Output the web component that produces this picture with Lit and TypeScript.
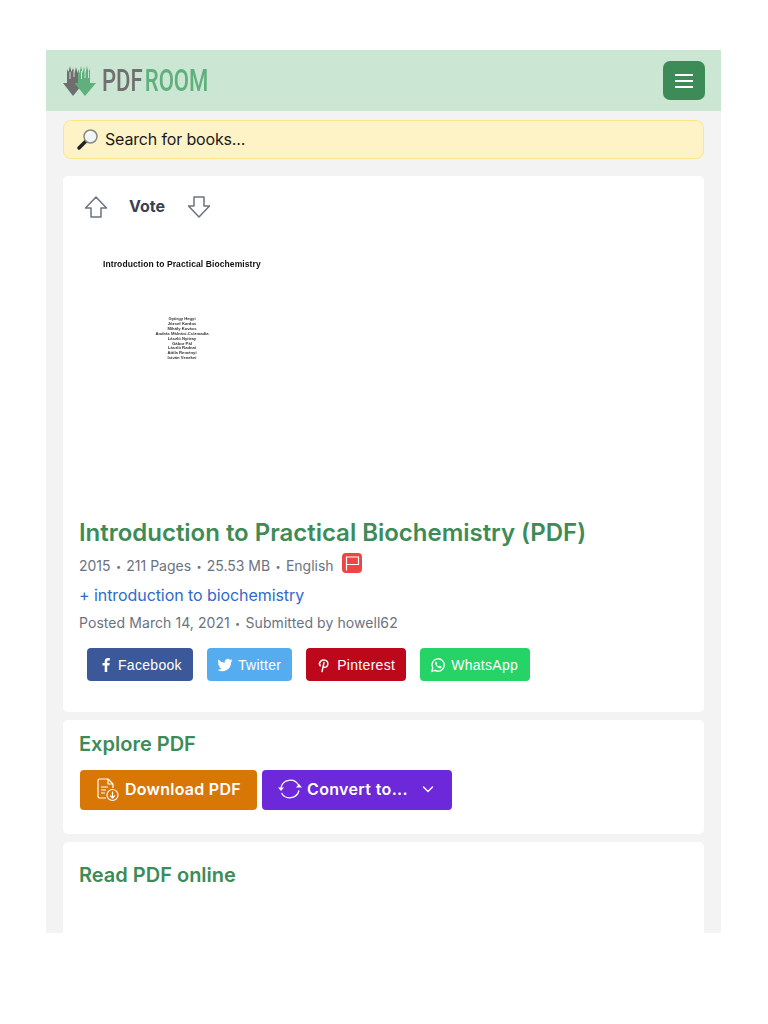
import { LitElement, html, css, svg } from 'lit';
import { customElement } from 'lit/decorators.js';

const names = [
  'György Hegyi',
  'József Kardos',
  'Mihály Kovács',
  'András Málnási-Csizmadia',
  'László Nyitray',
  'Gábor Pál',
  'László Radnai',
  'Attila Reményi',
  'István Venekei',
];

const shares = [
  {
    name: 'Facebook',
    cls: 'fb',
    icon: svg`<path fill="#fff" d="M8.2 15V8.6h2.1l.4-2.5H8.2V4.6c0-.8.3-1.2 1.3-1.2h1.3V1.100C10.500 1 9.800 1 9.100 1 7.100 1 5.700 2.200 5.700 4.300v1.800H3.500v2.500h2.200V15z"/>`,
  },
  {
    name: 'Twitter',
    cls: 'tw',
    icon: svg`<path fill="#fff" d="M15.500 3.300c-.6.300-1.200.4-1.800.5.600-.4 1.100-1 1.400-1.700-.6.400-1.300.6-2 .8A3.100 3.100 0 0 0 7.800 5.700 8.900 8.900 0 0 1 1.400 2.400a3.100 3.100 0 0 0 1 4.200c-.5 0-1-.2-1.400-.4 0 1.500 1.100 2.800 2.500 3.100-.5.100-.9.100-1.400.1.400 1.200 1.500 2.100 2.900 2.100A6.300 6.300 0 0 1 .4 12.800 8.900 8.900 0 0 0 14.100 5c.6-.4 1.100-1 1.400-1.700z"/>`,
  },
  {
    name: 'Pinterest',
    cls: 'pi',
    icon: svg`<path fill="none" stroke="#fff" stroke-width="1.500" stroke-linecap="round" d="M4.200 8.800C3.300 7.600 3.400 5.400 4.800 4.100 6.400 2.600 9.500 2.600 11 4.200c1.300 1.500 1 4.300-.4 5.500-1.200 1-3.100.8-3.500-.6M8 5.600 6 14.600"/>`,
  },
  {
    name: 'WhatsApp',
    cls: 'wa',
    icon: svg`<path fill="none" stroke="#fff" stroke-width="1.300" d="M1.800 14.300l.9-3.300a6.200 6.200 0 1 1 2.400 2.400z"/><path fill="#fff" d="M5.800 4.800c.3-.2.600-.2.800.1l.6 1.400c.1.200 0 .4-.1.500l-.5.600c.5 1 1.200 1.700 2.300 2.200l.6-.7c.2-.2.400-.2.600-.1l1.300.6c.3.100.3.300.3.600-.1 1-1.200 1.500-2.200 1.300C8.200 11 5.700 8.800 5 6.800c-.3-.8.100-1.600.8-2z"/>`,
  },
];

@customElement('app-root')
export class AppRoot extends LitElement {
  static styles = css`
    :host {
      display: block;
      height: 1024px;
      background: #fff;
      font-family: Inter, 'Liberation Sans', sans-serif;
      overflow: hidden;
    }

    .page {
      box-sizing: border-box;
      width: 675px;
      height: 883px;
      margin: 50px 0 0 46px;
      background: #f3f3f3;
      overflow: hidden;
    }

    /* Cabecalho */
    .header {
      height: 61px;
      background: #cce6d4;
      display: flex;
      align-items: center;
      justify-content: space-between;
      padding: 0 16px 0 17px;
    }

    .brand {
      display: flex;
      align-items: center;
      gap: 5px;
    }

    .wordmark {
      display: flex;
      gap: 3px;
      margin-top: -2px;
      font-family: 'Roboto', 'Liberation Sans', sans-serif;
      font-size: 32px;
      font-weight: 500;
      line-height: 1;
      transform: scaleX(0.69);
      transform-origin: left center;
    }

    .wordmark .pdf {
      color: #707070;
    }

    .wordmark .room {
      color: #5fb07c;
    }

    .menu {
      width: 42px;
      height: 39px;
      border-radius: 7px;
      background: #3d8b57;
      display: flex;
      flex-direction: column;
      align-items: center;
      justify-content: center;
      gap: 4px;
    }

    .menu span {
      display: block;
      width: 18px;
      height: 2px;
      background: #fff;
    }

    /* Busca */
    .search {
      box-sizing: border-box;
      height: 39px;
      margin: 9px 17px 0;
      background: #fef3c7;
      border: 1px solid #fde68a;
      border-radius: 8px;
      display: flex;
      align-items: center;
      gap: 5px;
      padding: 0 12px 1px;
      font-size: 16px;
      letter-spacing: -0.16px;
      color: #1a1a1a;
    }

    /* Cartoes */
    .card {
      background: #fff;
      border-radius: 5px;
      margin: 0 17px 8px;
      padding: 0 16px;
    }

    .main {
      height: 536px;
      margin-top: 17px;
      box-sizing: border-box;
      padding-top: 18px;
    }

    .vote {
      display: flex;
      align-items: center;
      height: 26px;
      padding-left: 5px;
      font-size: 16px;
      font-weight: 700;
      color: #374151;
    }

    .vote .label {
      margin: -2px 22px 0 21px;
    }

    .cover {
      height: 297px;
      padding: 39px 0 0 24px;
      box-sizing: border-box;
      font-family: 'Liberation Sans', sans-serif;
      color: #111;
      filter: blur(0.25px);
    }

    .cover h2 {
      margin: 0;
      font-size: 8.500px;
      line-height: 10px;
      font-weight: 700;
      letter-spacing: 0.1px;
    }

    .authors {
      width: 158px;
      margin-top: 48px;
      text-align: center;
      font-size: 4.200px;
      line-height: 4.900px;
      font-weight: 700;
      color: #333;
    }

    h1 {
      margin: 0;
      font-size: 24px;
      line-height: 32px;
      font-weight: 600;
      color: #3d8b57;
      letter-spacing: -0.02px;
    }

    .meta {
      display: flex;
      align-items: center;
      margin-top: 4px;
      height: 24px;
      font-size: 14px;
      color: #6b7280;
      white-space: pre;
    }

    .dot {
      display: inline-block;
      width: 15.700px;
      text-align: center;
      font-size: 9px;
      vertical-align: 1px;
    }

    .flag {
      width: 20px;
      height: 20px;
      margin: -5px 0 0 8px;
      border-radius: 4px;
      background: #ef4444;
      display: flex;
      align-items: center;
      justify-content: center;
    }

    .tag {
      margin-top: 6px;
      height: 24px;
      line-height: 24px;
      font-size: 16px;
      letter-spacing: -0.07px;
      color: #2f6bc8;
    }

    .posted {
      margin-top: 4px;
      height: 24px;
      line-height: 24px;
      font-size: 14px;
      letter-spacing: 0.07px;
      color: #6b7280;
    }

    .shares {
      display: flex;
      gap: 14px;
      margin: 13px 0 0 8px;
    }

    .share {
      display: flex;
      align-items: center;
      gap: 5px;
      height: 33px;
      box-sizing: border-box;
      padding: 0 11px 0 10px;
      border-radius: 4px;
      font-family: 'Liberation Sans', sans-serif;
      font-size: 14px;
      letter-spacing: 0.3px;
      color: #fff;
    }

    .fb { background: #3b5998; }
    .fb svg { margin: 0 -2px 0 2px; }
    .tw { background: #55acee; }
    .pi { background: #bd081c; }
    .wa { background: #25d366; padding-right: 12px; }

    /* Explorar */
    .explore {
      height: 114px;
      box-sizing: border-box;
      padding-top: 12px;
    }

    h3 {
      margin: 0;
      font-size: 20px;
      line-height: 25px;
      font-weight: 600;
      color: #3d8b57;
    }

    .actions {
      display: flex;
      gap: 5px;
      margin: 13px 0 0 1px;
    }

    .action {
      height: 40px;
      box-sizing: border-box;
      border-radius: 4px;
      display: flex;
      align-items: center;
      padding-bottom: 2px;
      color: #fff;
      font-size: 16px;
      font-weight: 600;
    }

    .download {
      width: 177px;
      background: #d97706;
      padding-left: 13px;
      gap: 4px;
      letter-spacing: 0.25px;
    }

    .convert {
      width: 190px;
      background: #6d28d9;
      padding-left: 16px;
      gap: 5px;
      letter-spacing: 0.35px;
    }

    .convert .chev {
      margin-left: 7px;
    }

    .read {
      height: 200px;
      padding-top: 21px;
      box-sizing: border-box;
    }
  `;

  render() {
    const dot = html`<span class="dot">•</span>`;
    return html`
      <div class="page">
        <header class="header">
          <div class="brand">
            <svg width="34" height="32" viewBox="0 0 34 32">
              <path fill="#6e6e6e" d="M4 18V4l1.500 3L7 1l1.500 6L10 3l1.500 5L13 2l1.500 6L16 4v14h4.500L10 31 0 18z"/>
              <path fill="#5fb07c" d="M15 18V5l1.500 3L18 1l1.500 7L21 2l1.500 6L24 1l1.500 7L27 3v15h6L22 31 11.500 18z"/>
              <path fill="#cce6d4" d="M6.500 7h1v7h-1zM10.500 6h1v6h-1zM18 6h1v8h-1zM21.500 5h1v8h-1zM25 7h1v6h-1z"/>
            </svg>
            <div class="wordmark"><span class="pdf">PDF</span><span class="room">ROOM</span></div>
          </div>
          <div class="menu"><span></span><span></span><span></span></div>
        </header>

        <div class="search">
          <svg width="24" height="24" viewBox="0 0 24 24">
            <path d="M3 21l7-7" stroke="#222" stroke-width="3.500" stroke-linecap="round"/>
            <circle cx="14.500" cy="9.500" r="6.500" fill="#eef4f8" stroke="#8a8a80" stroke-width="1.500"/>
            <path d="M11 7.500a4 4 0 0 1 4-2" fill="none" stroke="#fff" stroke-width="1.500"/>
          </svg>
          <span>Search for books...</span>
        </div>

        <section class="card main">
          <div class="vote">
            <svg width="24" height="24" viewBox="0 0 24 24" fill="none" stroke="#6b7280" stroke-width="1.500" stroke-linejoin="round">
              <path d="M12 2 1.500 13H7v9h10v-9h5.500z"/>
            </svg>
            <span class="label">Vote</span>
            <svg width="24" height="24" viewBox="0 0 24 24" fill="none" stroke="#6b7280" stroke-width="1.500" stroke-linejoin="round">
              <path d="M12 22 22.500 11H17V2H7v9H1.500z"/>
            </svg>
          </div>

          <div class="cover">
            <h2>Introduction to Practical Biochemistry</h2>
            <div class="authors">
              ${names.map((n) => html`<div>${n}</div>`)}
            </div>
          </div>

          <h1>Introduction to Practical Biochemistry (PDF)</h1>
          <div class="meta">
            <span>2015${dot}211 Pages${dot}25.53 MB${dot}English</span>
            <span class="flag">
              <svg width="16" height="16" viewBox="0 0 16 16" fill="none" stroke="#fff" stroke-width="1.200">
                <path d="M2.500 15.500V2h12v7.500h-12"/>
              </svg>
            </span>
          </div>
          <div class="tag">+ introduction to biochemistry</div>
          <div class="posted">Posted March 14, 2021${dot}Submitted by howell62</div>
          <div class="shares">
            ${shares.map(
              (s) => html`
                <div class="share ${s.cls}">
                  <svg width="16" height="16" viewBox="0 0 16 16">${s.icon}</svg>
                  <span>${s.name}</span>
                </div>
              `
            )}
          </div>
        </section>

        <section class="card explore">
          <h3>Explore PDF</h3>
          <div class="actions">
            <div class="action download">
              <svg width="28" height="28" viewBox="0 0 28 28" fill="none" stroke="#fff" stroke-width="1.200" stroke-linejoin="round">
                <path d="M13 23H6.500A1.500 1.500 0 0 1 5 21.500v-16A1.500 1.500 0 0 1 6.500 4H15l5 5v4"/>
                <path d="M15 4v5h5M8 12h7M8 15h5M8 18h4"/>
                <circle cx="19.500" cy="20" r="5.500"/>
                <path d="M19.500 17v6M17.500 21l2 2 2-2" stroke-linecap="round"/>
              </svg>
              <span>Download PDF</span>
            </div>
            <div class="action convert">
              <svg width="24" height="24" viewBox="0 0 24 24" fill="none" stroke="#fff" stroke-width="1.300">
                <path d="M3 10.500A9.500 9.500 0 0 1 20.500 8"/>
                <path d="M21 13.500A9.500 9.500 0 0 1 3.500 16"/>
                <path fill="#fff" stroke="none" d="M0 10.500h6L3 14zM18 10.500h6L21 7z"/>
              </svg>
              <span>Convert to...</span>
              <svg class="chev" width="16" height="16" viewBox="0 0 16 16" fill="none" stroke="#fff" stroke-width="1.400" stroke-linecap="round" stroke-linejoin="round">
                <path d="M3.500 6l4.500 4.500L12.500 6"/>
              </svg>
            </div>
          </div>
        </section>

        <section class="card read">
          <h3>Read PDF online</h3>
        </section>
      </div>
    `;
  }
}
